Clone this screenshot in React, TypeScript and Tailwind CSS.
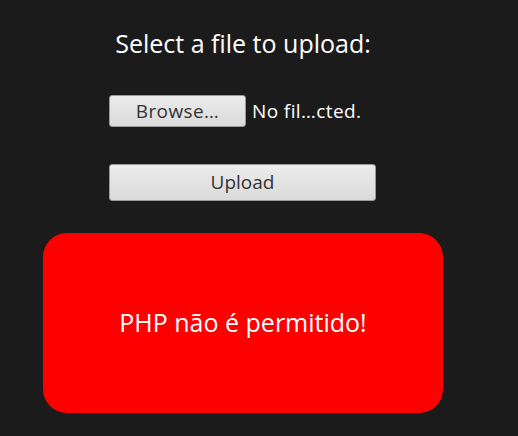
export default function App() {
  return (
    <div className="min-h-screen bg-[#1b1b1b] text-white font-['Open_Sans',sans-serif]">
      <div className="w-[400px] ml-[43px] pt-[25px] flex flex-col">
        <h1 className="text-center text-[25px] leading-[36px] text-white">Select a file to upload:</h1>

        <div className="mt-[34px] ml-[66px] flex items-center gap-[6px]">
          <button className="w-[137px] h-[32px] rounded-[3px] border border-[#9a9a9a] bg-gradient-to-b from-[#ececec] to-[#dadada] text-[#333] text-[19px] leading-none tracking-[0.4px]">
            Browse…
          </button>
          <span className="text-[19px] text-white tracking-[0.4px]">No fil…cted.</span>
        </div>

        <button className="mt-[37px] ml-[66px] w-[267px] h-[37px] rounded-[3px] border border-[#9a9a9a] bg-gradient-to-b from-[#ececec] to-[#dadada] text-[#333] text-[19px] leading-none">
          Upload
        </button>

        <div className="mt-[32px] h-[180px] rounded-[24px] bg-[#ff0000] flex items-center justify-center">
          <p className="text-[25px] text-white">PHP não é permitido!</p>
        </div>
      </div>
    </div>
  );
}
